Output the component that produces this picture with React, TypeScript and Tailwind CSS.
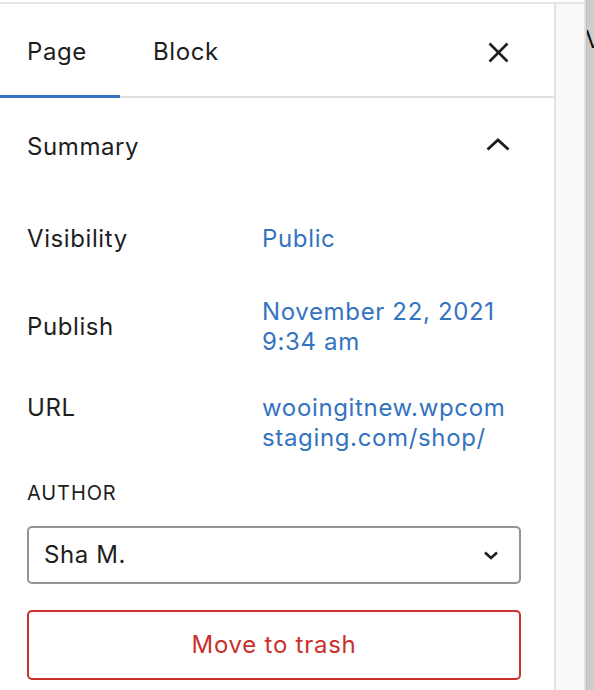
import React from "react";

const font = { fontFamily: "Inter, 'Noto Sans', sans-serif" };

function Row({ label, children, center = false }: { label: string; children: React.ReactNode; center?: boolean }) {
  return (
    <div className={`flex ${center ? "items-center" : "items-start"}`}>
      <div className="w-[235px] shrink-0 text-[24px] leading-[30px] tracking-[0.6px] text-[#1e1e1e]">{label}</div>
      <div className="text-[24px] leading-[30px] tracking-[0.65px] text-[#3473c0]">{children}</div>
    </div>
  );
}

export default function App() {
  return (
    <div className="w-[594px] h-[690px] bg-white flex overflow-hidden" style={font}>
      <div className="flex flex-col w-[584px] shrink-0">
        <div className="h-[2px] bg-white" />
        <div className="flex flex-1 border-t-2 border-[#e4e4e4]">
          {/* Panel */}
          <div className="w-[556px] shrink-0 border-r-2 border-[#e4e4e4] flex flex-col">
            {/* Header tabs */}
            <div className="relative h-[94px] flex items-stretch border-b-2 border-[#e0e0e0] pt-[4px]">
              <div className="relative w-[120px] flex items-center pl-[27px] text-[24px] tracking-[0.6px] text-[#1e1e1e]">
                Page
                <div className="absolute left-0 right-0 bottom-[-2px] h-[3px] bg-[#3473c0]" />
              </div>
              <div className="flex items-center pl-[33px] text-[24px] tracking-[0.6px] text-[#1e1e1e]">Block</div>
              <div className="flex-1" />
              <div className="w-[98px] flex items-center pl-[32px]">
                <svg width="21" height="21" viewBox="0 0 21 21">
                  <path d="M1.5 1.5L19.5 19.5M19.5 1.5L1.5 19.5" stroke="#1e1e1e" strokeWidth="2.6" fill="none" />
                </svg>
              </div>
            </div>
            {/* Summary header */}
            <div className="h-[98px] flex items-center justify-between pl-[27px] pr-[44px]">
              <span className="text-[24px] tracking-[0.6px] text-[#1e1e1e]">Summary</span>
              <svg width="24" height="14" viewBox="0 0 24 14" className="mb-[6px]">
                <path d="M1.5 12.5L12 3L22.5 12.5" stroke="#1e1e1e" strokeWidth="2.8" fill="none" />
              </svg>
            </div>
            <div className="pl-[27px] pr-[33px] flex flex-col">
              <div className="mt-[28px]">
                <Row label="Visibility">Public</Row>
              </div>
              <div className="mt-[43px]">
                <Row label="Publish" center>
                  <div>November 22, 2021</div>
                  <div>9:34 am</div>
                </Row>
              </div>
              <div className="mt-[36px]">
                <Row label="URL">
                  <div>wooingitnew.wpcom</div>
                  <div>staging.com/shop/</div>
                </Row>
              </div>
              <div className="mt-[28px] h-[24px] flex items-center text-[20px] tracking-[0.9px] text-[#1e1e1e]">AUTHOR</div>
              <div className="mt-[21px] w-[494px] h-[58px] border-2 border-[#949494] rounded-[5px] flex items-center justify-between pl-[15px] pr-[21px]">
                <span className="text-[24px] tracking-[0.6px] text-[#1e1e1e]">Sha M.</span>
                <svg width="14" height="9" viewBox="0 0 14 9">
                  <path d="M1 1.5L7 7L13 1.5" stroke="#1e1e1e" strokeWidth="2.6" fill="none" />
                </svg>
              </div>
              <div className="mt-[26px] w-[494px] h-[70px] border-2 border-[#c9302c] rounded-[5px] flex items-center justify-center text-[24px] tracking-[0.75px] text-[#c9302c]">
                Move to trash
              </div>
            </div>
          </div>
          {/* light strip */}
          <div className="flex-1 bg-[#f9f9f9]" />
        </div>
      </div>
      <div className="w-[2px] shrink-0 bg-[#e2e2e2]" />
      <div className="flex-1 bg-[#cccccc] border-l border-[#bdbdbd] overflow-hidden">
        <div className="mt-[22px] -ml-[2px] text-[24px] text-[#111]">V</div>
      </div>
    </div>
  );
}
